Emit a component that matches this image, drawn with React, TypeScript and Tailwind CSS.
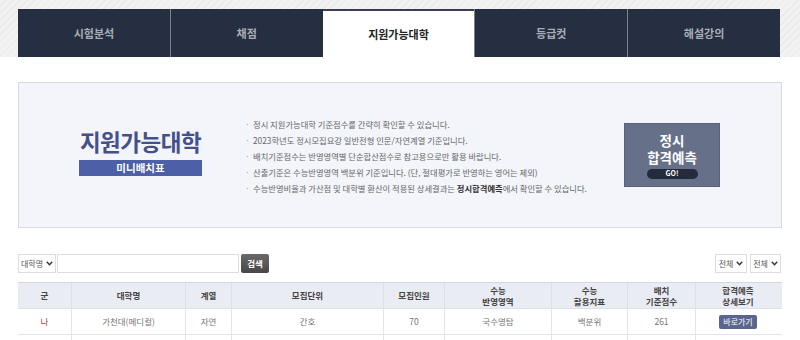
import React from "react";

const tabs = ["시험분석", "채점", "지원가능대학", "등급컷", "해설강의"];
const bullets: React.ReactNode[] = [
  "정시 지원가능대학 기준점수를 간략히 확인할 수 있습니다.",
  "2023학년도 정시모집요강 일반전형 인문/자연계열 기준입니다.",
  "배치기준점수는 반영영역별 단순합산점수로 참고용으로만 활용 바랍니다.",
  "산출기준은 수능반영영역 백분위 기준입니다. (단, 절대평가로 반영하는 영어는 제외)",
  <>수능반영비율과 가산점 및 대학별 환산이 적용된 상세결과는 <b className="text-[#333]">정시합격예측</b>에서 확인할 수 있습니다.</>,
];

const cols = [
  { w: "w-[53px]", h: ["군"] },
  { w: "w-[114px]", h: ["대학명"] },
  { w: "w-[46px]", h: ["계열"] },
  { w: "w-[152px]", h: ["모집단위"] },
  { w: "w-[61px]", h: ["모집인원"] },
  { w: "w-[107px]", h: ["수능", "반영영역"] },
  { w: "w-[76px]", h: ["수능", "활용지표"] },
  { w: "w-[68px]", h: ["배치", "기준점수"] },
  { w: "w-[85px]", h: ["합격예측", "상세보기"] },
];

const Chevron = () => (
  <svg width="7" height="5" viewBox="0 0 7 5" className="ml-[3px]">
    <path d="M0.8 0.8 L3.5 3.8 L6.2 0.8" stroke="#333" strokeWidth="1.4" fill="none" />
  </svg>
);

export default function App() {
  return (
    <div className="w-[800px] h-[340px] overflow-hidden bg-white font-['Noto_Sans_CJK_KR','Noto_Sans',sans-serif]">
      <div className="h-[57px] pt-[9px] px-[18px] bg-[repeating-linear-gradient(135deg,#f2f2f2_0px,#f2f2f2_4px,#e9e9e9_4px,#e9e9e9_5px)]">
        <div className="flex h-[48px] w-[762px]">
          {tabs.map((t, i) => {
            const active = i === 2;
            return (
              <div
                key={t}
                className={
                  "flex-1 flex items-center justify-center text-[11px] font-bold " +
                  (active
                    ? "bg-white text-[#222] border-t-2 border-[#39404f]"
                    : "bg-[#262f42] text-[#a9adb5] border-l border-[#7b8190] first:border-l-0")
                }
              >
                {t}
              </div>
            );
          })}
        </div>
      </div>

      <div className="mx-[18px] mt-[25px] h-[146px] border border-[#d6d9e4] bg-[#f3f5fa] flex items-center">
        <div className="w-[226px] pl-[17px] flex flex-col items-center mb-[8px]">
          <div className="text-[22.5px] leading-[30px] font-bold text-[#44508a] tracking-[-0.5px]">지원가능대학</div>
          <div className="mt-[4px] w-[123px] h-[16px] bg-[#4d5fa6] text-white text-[10.5px] font-bold flex items-center justify-center">미니배치표</div>
        </div>
        <ul className="flex-1 text-[8.3px] leading-[16px] text-[#666] pt-[2px]">
          {bullets.map((b, i) => (
            <li key={i} className="flex">
              <span className="w-[8px] text-[#999]">·</span>
              <span>{b}</span>
            </li>
          ))}
        </ul>
        <div className="mr-[61px] w-[96px] h-[64px] bg-[#667089] border border-[#59627a] flex flex-col items-center justify-center">
          <div className="text-white font-bold text-[13.5px] leading-[17px] text-center">정시<br />합격예측</div>
          <div className="mt-[3px] w-[51px] h-[10px] rounded-full bg-[#232b3c] text-white text-[7px] font-bold flex items-center justify-center">GO!</div>
        </div>
      </div>

      <div className="mx-[18px] mt-[26px] flex items-center h-[19px]">
        <div className="h-[19px] w-[38px] border border-[#ddd] bg-white text-[8px] text-[#555] flex items-center justify-center">대학명<Chevron /></div>
        <div className="ml-[1px] h-[19px] w-[182px] border border-[#ddd] bg-white" />
        <div className="ml-[2px] h-[19px] w-[28px] rounded-[2px] bg-[linear-gradient(#6a6a6a,#474747)] text-white text-[8.5px] font-bold flex items-center justify-center">검색</div>
        <div className="flex-1" />
        <div className="h-[19px] w-[32px] border border-[#ddd] bg-white text-[8px] text-[#555] flex items-center justify-center">전체<Chevron /></div>
        <div className="ml-[3px] mr-[1px] h-[19px] w-[31px] border border-[#ddd] bg-white text-[8px] text-[#555] flex items-center justify-center">전체<Chevron /></div>
      </div>

      <div className="mx-[18px] mt-[9px] border-t border-[#d5d8e0]">
        <div className="flex h-[26px] bg-[#eaecf3] border-b border-[#dfe1e8]">
          {cols.map((c, i) => (
            <div key={i} className={c.w + " flex flex-col items-center justify-center text-[8.5px] leading-[11px] font-bold text-[#444] " + (i > 0 ? "border-l border-[#dde0e8]" : "")}>
              {c.h.map((l) => (<span key={l}>{l}</span>))}
            </div>
          ))}
        </div>
        <div className="flex h-[26px] border-b border-[#e2e4ea] text-[8.5px] text-[#777]">
          {["나", "가천대(메디컬)", "자연", "간호", "70", "국수영탐", "백분위", "261", ""].map((v, i) => (
            <div key={i} className={cols[i].w + " flex items-center justify-center " + (i > 0 ? "border-l border-[#e2e4ea] " : "") + (i === 0 ? "text-[#9b3b3b]" : "")}>
              {i === 8 ? (
                <span className="h-[14px] px-[4px] rounded-[2px] bg-[#5b668f] text-white text-[8px] flex items-center">바로가기</span>
              ) : v}
            </div>
          ))}
        </div>
        <div className="flex h-[26px]">
          {cols.map((c, i) => (
            <div key={i} className={c.w + (i > 0 ? " border-l border-[#e2e4ea]" : "")} />
          ))}
        </div>
      </div>
    </div>
  );
}
